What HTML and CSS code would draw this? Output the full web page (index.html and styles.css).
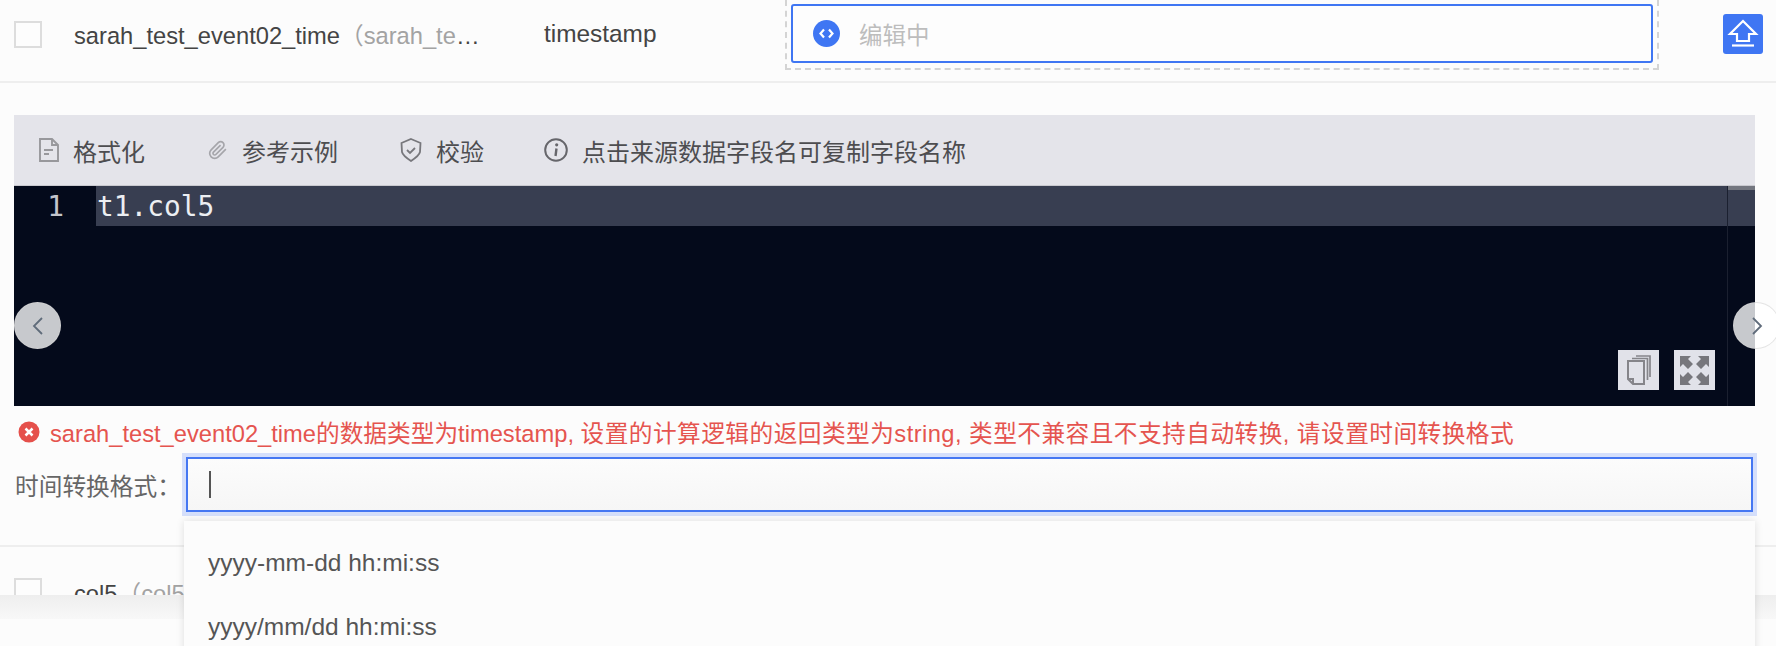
FILE: index.html
```html
<!DOCTYPE html>
<html lang="zh">
<head>
<meta charset="utf-8">
<title>字段编辑</title>
<link rel="stylesheet" href="styles.css">
</head>
<body>
<div class="page">
  <div class="row row-first">
    <span class="check"></span>
    <div class="name">sarah_test_event02_time<span class="alias">（sarah_test_event02_time）</span></div>
    <div class="type">timestamp</div>
    <div class="drop-zone">
      <div class="edit-box">
        <svg class="code-icon" viewBox="0 0 27 27"><circle cx="13.5" cy="13.5" r="13.5" fill="#3f76f3"/><path d="M11 9.5 7.5 13.5l3.500 4M16 9.500l3.500 4-3.500 4" fill="none" stroke="#fff" stroke-width="2.200"/></svg>
        <span class="edit-text">编辑中</span>
      </div>
    </div>
    <svg class="upload" viewBox="0 0 40 40"><rect width="40" height="40" rx="3" fill="#3f76f3"/><path d="M20 7 7 20h7v7h12v-7h7z" fill="none" stroke="#fff" stroke-width="2.200"/><path d="M9 31.500h22" stroke="#fff" stroke-width="2.200"/></svg>
  </div>

  <div class="detail">
    <div class="toolbar">
      <div class="tool tool-format">
        <svg class="tool-icon" width="20" height="24" viewBox="0 0 20 24"><path d="M1 1h12l6 6v16H1zM13 1v6h6M5 12h9M5 16h5" fill="none" stroke="#98989c" stroke-width="1.900"/></svg>
        <span>格式化</span>
      </div>
      <div class="tool tool-sample">
        <svg class="tool-icon" width="20" height="22" viewBox="0 0 24 24"><path d="m21.440 11.050-9.190 9.190a6 6 0 0 1-8.490-8.490l8.570-8.570A4 4 0 1 1 18 8.840l-8.590 8.570a2 2 0 0 1-2.830-2.830l8.490-8.480" fill="none" stroke="#a5a5aa" stroke-width="2"/></svg>
        <span>参考示例</span>
      </div>
      <div class="tool tool-check">
        <svg class="tool-icon" width="22" height="24" viewBox="0 0 22 24"><path d="M11 1 20.500 5l-.5 9c-.8 3.500-6 7-9 9-3-2-8.200-5.500-9-9l-.5-9z" fill="none" stroke="#77777c" stroke-width="1.800"/><path d="m7 12 3 3 5-5" fill="none" stroke="#77777c" stroke-width="1.800"/></svg>
        <span>校验</span>
      </div>
      <div class="tool tool-info">
        <svg class="tool-icon" width="24" height="24" viewBox="0 0 24 24"><circle cx="12" cy="12" r="10.800" fill="none" stroke="#66666b" stroke-width="2"/><path d="M12.500 10.500 11.500 18" stroke="#66666b" stroke-width="2.400"/><circle cx="12.700" cy="6.800" r="1.600" fill="#66666b"/></svg>
        <span>点击来源数据字段名可复制字段名称</span>
      </div>
    </div>

    <div class="editor">
      <div class="line">
        <span class="gutter">1</span>
        <span class="code">t1.col5</span>
      </div>
      <div class="minimap"></div>
      <div class="editor-tools">
        <button class="editor-btn" type="button" aria-label="复制">
          <svg width="24" height="30" viewBox="0 0 24 30"><path d="M1 6h16v23H6l-5-5zM1 24h5v5" fill="none" stroke="#85858a" stroke-width="2"/><path d="M5 3.500h15.500V25M9 1h14v21" fill="none" stroke="#85858a" stroke-width="1.700"/></svg>
        </button>
        <button class="editor-btn" type="button" aria-label="全屏">
          <svg width="29" height="29" viewBox="0 0 29 29"><path fill="#77777c" d="M0 0h11L8 3l5 5-5 5-5-5-3 3zM29 0H18l3 3-5 5 5 5 5-5 3 3zM0 29h11l-3-3 5-5-5-5-5 5-3-3zM29 29H18l3-3-5-5 5-5 5 5 3-3z"/></svg>
        </button>
      </div>
    </div>

    <div class="error">
      <svg class="error-icon" viewBox="0 0 22 22"><circle cx="11" cy="11" r="10.500" fill="#e5504b"/><path d="m7.500 7.500 7 7m0-7-7 7" stroke="#fff" stroke-width="2.500"/></svg>
      <span>sarah_test_event02_time的数据类型为timestamp, <span class="error-tail">设置的计算逻辑的返回类型为string, 类型不兼容且不支持自动转换, 请设置时间转换格式</span></span>
    </div>

    <div class="field">
      <label class="field-label">时间转换格式：</label>
      <div class="field-input"><span class="caret"></span></div>
    </div>
  </div>

  <div class="row-clip">
    <div class="row row-second">
      <span class="check"></span>
      <div class="name">col5<span class="alias">（col5）</span></div>
    </div>
  </div>
  <div class="footer-shade"></div>

  <ul class="dropdown">
    <li>yyyy-mm-dd hh:mi:ss</li>
    <li>yyyy/mm/dd hh:mi:ss</li>
  </ul>

  <button class="nav nav-left" type="button" aria-label="上一个"><svg width="14" height="20" viewBox="0 0 14 20"><path d="M11 2 3 10l8 8" fill="none" stroke="#5f6b7a" stroke-width="1.800"/></svg></button>
  <button class="nav nav-right" type="button" aria-label="下一个"><svg width="14" height="20" viewBox="0 0 14 20"><path d="m3 2 8 8-8 8" fill="none" stroke="#5f6b7a" stroke-width="1.800"/></svg></button>
</div>
</body>
</html>
```
FILE: styles.css
```css
* { box-sizing: border-box; }
html, body { margin: 0; padding: 0; background: #fff; }
body {
  font-family: "Liberation Sans", "Noto Sans CJK SC", sans-serif;
  font-size: 23.7px;
  color: #4a4a4a;
}
.page { position: relative; width: 1776px; height: 646px; overflow: hidden; background: #fcfcfc; }

.row { display: flex; align-items: center; height: 83px; padding: 0 13px 13px 14px; }
.row-first { border-bottom: 2px solid #eeeeee; }
.check { flex: none; width: 28px; height: 27px; border: 2px solid #dddddd; background: #fdfdfd; }
.name { flex: none; width: 407px; margin-left: 32px; white-space: nowrap; overflow: hidden; text-overflow: ellipsis; color: #444; }
.alias { color: #a3a3a3; }
.type { flex: none; width: 241px; margin-left: 63px; color: #444; font-size: 24.400px; }
.drop-zone { flex: none; align-self: flex-start; width: 874px; height: 70px; padding: 4px; border: 2px dashed #d4d4d4; border-top: 0; }
.edit-box { display: flex; align-items: center; height: 59px; padding-left: 20px; border: 2px solid #3f76f3; border-radius: 3px; background: #fdfdfd; }
.code-icon { width: 27px; height: 27px; flex: none; }
.edit-text { margin-left: 19px; color: #bdbdbd; font-size: 23.500px; }
.upload { flex: none; align-self: flex-start; width: 40px; height: 40px; margin-left: 64px; margin-top: 14px; }

.detail { padding: 32px 21px 0 14px; }
.toolbar { display: flex; align-items: center; height: 71px; padding-left: 25px; background: #e4e4ea; border-bottom: 1px solid #c9c9cf; font-size: 24px; }
.tool { display: flex; align-items: center; gap: 14px; flex: none; color: #4d4d50; }
.tool-sample { margin-left: 63px; }
.tool-check { margin-left: 62px; }
.tool-info { margin-left: 60px; }
.tool-icon { flex: none; }

.editor { position: relative; height: 220px; background: #040a1b; }
.line { display: flex; height: 40px; align-items: center; font-family: "DejaVu Sans Mono", monospace; font-size: 27.800px; }
.gutter { flex: none; width: 82px; padding-right: 32px; text-align: right; color: #c3c5cc; }
.code { flex: 1; display: flex; align-items: center; height: 40px; padding-left: 1px; background: #383e51; color: #eceef2; }
.minimap { position: absolute; top: 0; right: 0; bottom: 0; width: 28px; border-left: 1px solid #1b2030; }
.minimap::before { content: ""; display: block; height: 4px; background: #73767f; }
.editor-tools { position: absolute; right: 40px; bottom: 16px; display: flex; gap: 15px; }
.editor-btn { display: flex; align-items: center; justify-content: center; width: 41px; height: 40px; padding: 0; border: 0; background: #e1e2e9; }

.error { display: flex; align-items: center; gap: 10px; height: 38px; margin: 7px 0 6px 4px; color: #e5544f; white-space: nowrap; }
.error-icon { flex: none; width: 22px; height: 22px; }
.error-tail { letter-spacing: .45px; }

.field { display: flex; align-items: center; height: 55px; }
.field-label { flex: none; width: 172px; padding-left: 1px; color: #666; white-space: nowrap; }
.field-input { flex: 1; display: flex; align-items: center; height: 55px; margin-right: 2px; padding-left: 21px; border: 2px solid #4577f2; background: linear-gradient(#fcfcfc, #f6f6f6); box-shadow: 0 0 0 4px #d5dffb; }
.caret { width: 2px; height: 27px; background: #555; }

.row-clip { height: 50px; margin-top: 33px; overflow: hidden; border-top: 2px solid #eeeeee; }
.row-second { align-items: flex-start; padding-top: 31px; padding-bottom: 0; }
.row-second .name { margin-top: -3px; }
.footer-shade { height: 24px; background: linear-gradient(#eeeeee, #f8f8f8); }

.dropdown { position: absolute; left: 184px; top: 521px; width: 1571px; margin: 0; padding: 10px 0 0; list-style: none; background: #fcfcfc; box-shadow: 0 0 8px rgba(0, 0, 0, .12); }
.dropdown li { display: flex; align-items: center; height: 64px; padding-left: 24px; color: #555; font-size: 24.500px; white-space: nowrap; }

.nav { position: absolute; top: 302px; display: flex; align-items: center; justify-content: center; width: 47px; height: 47px; padding: 0; border: 1px solid rgba(210, 210, 210, .6); border-radius: 50%; background: rgba(255, 255, 255, .78); }
.nav-left { left: 14px; }
.nav-right { left: 1733px; }
```
